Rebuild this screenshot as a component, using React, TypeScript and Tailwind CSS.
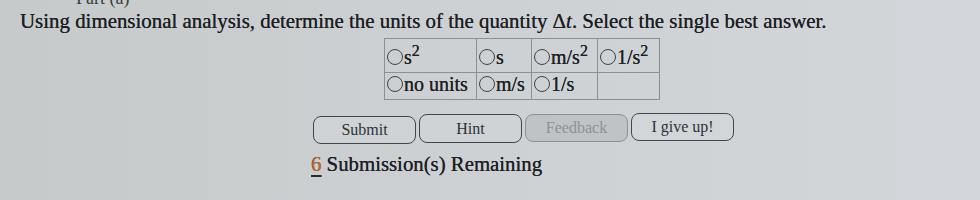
import React from "react"

const serif = { fontFamily: '"Liberation Serif", "Times New Roman", serif' }

function Radio({ label, sup }: { label: string; sup?: string }) {
  return (
    <span
      className="inline-flex items-end whitespace-nowrap text-[20px] leading-[22px] text-[#1e2124] [text-shadow:0_0_0.5px_#1e2124]"
      style={serif}
    >
      <span className="mb-[3px] mr-[1px] inline-block h-[16px] w-[16px] shrink-0 rounded-full border-[1.5px] border-[#3f4346]" />
      <span>
        {label}
        {sup && <sup className="text-[16px] leading-none">{sup}</sup>}
      </span>
    </span>
  )
}

export default function App() {
  const cell = "border border-[#8c9092] px-[2px] text-left align-bottom"
  return (
    <div
      className="h-[200px] w-[980px] overflow-hidden bg-gradient-to-r from-[#c6cacb] via-[#cdd1d3] to-[#d3d7db] text-[#1e2124]"
      style={serif}
    >
      <div className="-mt-[11px] pl-[76px] text-[18px] leading-[18px] text-[#3a3d40]">Part (a)</div>
      <p className="mt-[2px] pl-[20px] text-[20.9px] leading-[24px] [text-shadow:0_0_0.5px_#1e2124]">
        Using dimensional analysis, determine the units of the quantity Δ<i>t</i>. Select the single best answer.
      </p>

      <div className="ml-[384px] mt-[5px]">
        <table className="table-fixed border-collapse" style={serif}>
          <tbody>
            <tr className="h-[34px]">
              <td className={`${cell} w-[92px]`}><Radio label="s" sup="2" /></td>
              <td className={`${cell} w-[55px]`}><Radio label="s" /></td>
              <td className={`${cell} w-[66px]`}><Radio label="m/s" sup="2" /></td>
              <td className={`${cell} w-[62px]`}><Radio label="1/s" sup="2" /></td>
            </tr>
            <tr className="h-[25px]">
              <td className={cell}><Radio label="no units" /></td>
              <td className={cell}><Radio label="m/s" /></td>
              <td className={cell}><Radio label="1/s" /></td>
              <td className={cell}></td>
            </tr>
          </tbody>
        </table>
      </div>

      <div className="ml-[313px] mt-[14px] flex items-start gap-[3px] text-[16px] [text-shadow:0_0_0.4px_currentColor]">
        <button className="mt-[2px] h-[28px] w-[103px] rounded-[8px] border-[1.5px] border-[#43474a] bg-[#cfd3d5] text-[#2e3235]">Submit</button>
        <button className="h-[29px] w-[103px] rounded-[8px] border-[1.5px] border-[#43474a] bg-[#cfd3d5] text-[#2e3235]">Hint</button>
        <button className="h-[28px] w-[103px] rounded-[8px] border-[1.5px] border-[#8e9294] bg-[#bfc3c5] text-[#8e9193]">Feedback</button>
        <button className="-mt-[1px] h-[28px] w-[103px] rounded-[8px] border-[1.5px] border-[#43474a] bg-[#d2d6d8] text-[#2e3235]">I give up!</button>
      </div>

      <div className="ml-[311px] mt-[9px] text-[20.8px] leading-[22px] [text-shadow:0_0_0.4px_#1e2124]">
        <span className="text-[#c8642a] underline decoration-[#2a2d30] decoration-2 underline-offset-4">6</span> Submission(s) Remaining
      </div>
    </div>
  )
}
